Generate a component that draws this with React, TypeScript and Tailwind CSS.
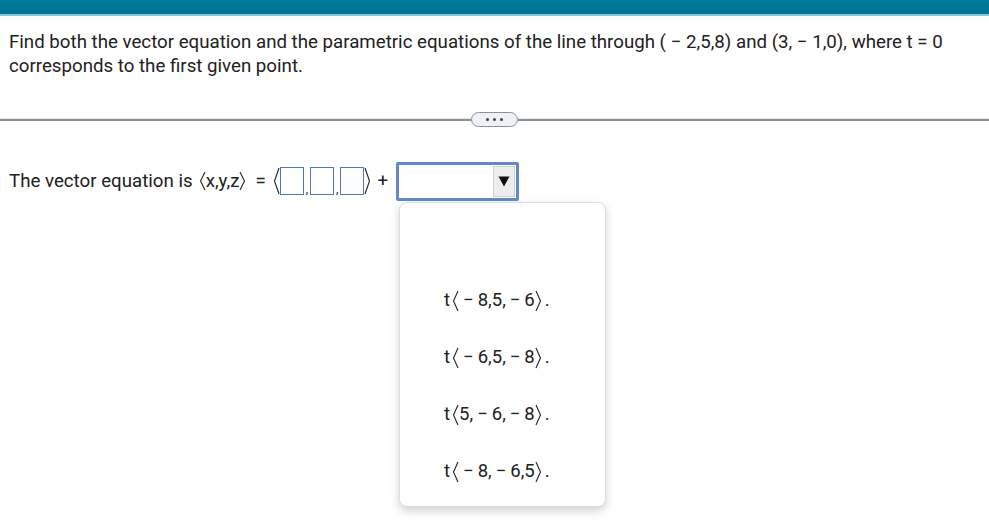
import React from "react";

function LBracket({ h = 20 }: { h?: number }) {
  return (
    <svg width="7" height={h} viewBox={`0 0 7 ${h}`} className="inline-block">
      <path d={`M6 1 L1.5 ${h / 2} L6 ${h - 1}`} fill="none" stroke="#222" strokeWidth="1.1" />
    </svg>
  );
}

function RBracket({ h = 20 }: { h?: number }) {
  return (
    <svg width="7" height={h} viewBox={`0 0 7 ${h}`} className="inline-block">
      <path d={`M1 1 L5.5 ${h / 2} L1 ${h - 1}`} fill="none" stroke="#222" strokeWidth="1.1" />
    </svg>
  );
}

function Box() {
  return <span className="inline-block w-[24px] h-[28px] border border-[#4f79c2] bg-white" />;
}

const options = [
  ["- 8", "5", "- 6"],
  ["- 6", "5", "- 8"],
  ["5", "- 6", "- 8"],
  ["- 8", "- 6", "5"],
];

function Num({ v }: { v: string }) {
  if (v.startsWith("- ")) {
    return (
      <span>
        <span className="mx-[4px]">−</span>
        {v.slice(2)}
      </span>
    );
  }
  return <span>{v}</span>;
}

export default function App() {
  return (
    <div className="w-[989px] h-[522px] bg-white text-[#212121] font-['Roboto',sans-serif] text-[18.7px] overflow-hidden">
      <div className="h-[14px] bg-[#007698]" />
      <div className="h-[2px] bg-[#8cc4d3]" />

      <div className="px-[9px] pt-[14px] leading-[24px]">
        Find both the vector equation and the parametric equations of the line through ( − 2,5,8) and (3, − 1,0), where t = 0
        <br />
        corresponds to the first given point.
      </div>

      <div className="mt-[34px] flex items-center">
        <div className="flex-1 flex flex-col">
          <div className="h-[1px] bg-[#e4e7ea]" />
          <div className="h-[2px] bg-[#8c9196]" />
        </div>
        <div className="w-[47px] h-[15px] rounded-full border border-[#8c9196] bg-[#eef1f5] flex items-center justify-center gap-[4px]">
          <span className="w-[3px] h-[3px] rounded-full bg-[#444]" />
          <span className="w-[3px] h-[3px] rounded-full bg-[#444]" />
          <span className="w-[3px] h-[3px] rounded-full bg-[#444]" />
        </div>
        <div className="flex-1 flex flex-col">
          <div className="h-[1px] bg-[#e4e7ea]" />
          <div className="h-[2px] bg-[#8c9196]" />
        </div>
      </div>

      <div className="mt-[34px] pl-[9px] flex items-center h-[40px]">
        <span>The vector equation is</span>
        <span className="ml-[6px] flex items-center">
          <LBracket h={20} />
          <span>x,y,z</span>
          <RBracket h={20} />
        </span>
        <span className="ml-[9px]">=</span>
        <span className="ml-[7px] flex items-end">
          <LBracket h={28} />
          <Box />
          <span className="text-[12px] leading-[12px] mx-[2px]">,</span>
          <Box />
          <span className="text-[12px] leading-[12px] mx-[2px]">,</span>
          <Box />
          <RBracket h={28} />
        </span>
        <span className="ml-[6px]">+</span>
        <div className="relative ml-[8px]">
          <div className="w-[123px] h-[39px] border-[3px] border-[#6488cc] rounded-[2px] bg-white flex items-center justify-end pr-[1px]">
            <div className="w-[22px] h-[31px] bg-[#ededed] border border-[#d0d0d0] flex items-center justify-center">
              <svg width="12" height="11" viewBox="0 0 12 11">
                <path d="M0.5 0.5 H11.5 L6 10.5 Z" fill="#111" />
              </svg>
            </div>
          </div>
          <div className="absolute left-[3px] top-[40px] w-[207px] h-[305px] bg-white rounded-[8px] border border-[#dedede] shadow-[0_4px_10px_rgba(0,0,0,0.18)] pt-[86px] pl-[44px] flex flex-col gap-[33px] text-[18.5px]">
            {options.map((o, i) => (
              <div key={i} className="flex items-center h-[24px]">
                <span>t</span>
                <span className="ml-[2px]">
                  <LBracket h={22} />
                </span>
                <Num v={o[0]} />,
                <Num v={o[1]} />,
                <Num v={o[2]} />
                <RBracket h={22} />
                <span className="ml-[3px]">.</span>
              </div>
            ))}
          </div>
        </div>
      </div>
    </div>
  );
}
